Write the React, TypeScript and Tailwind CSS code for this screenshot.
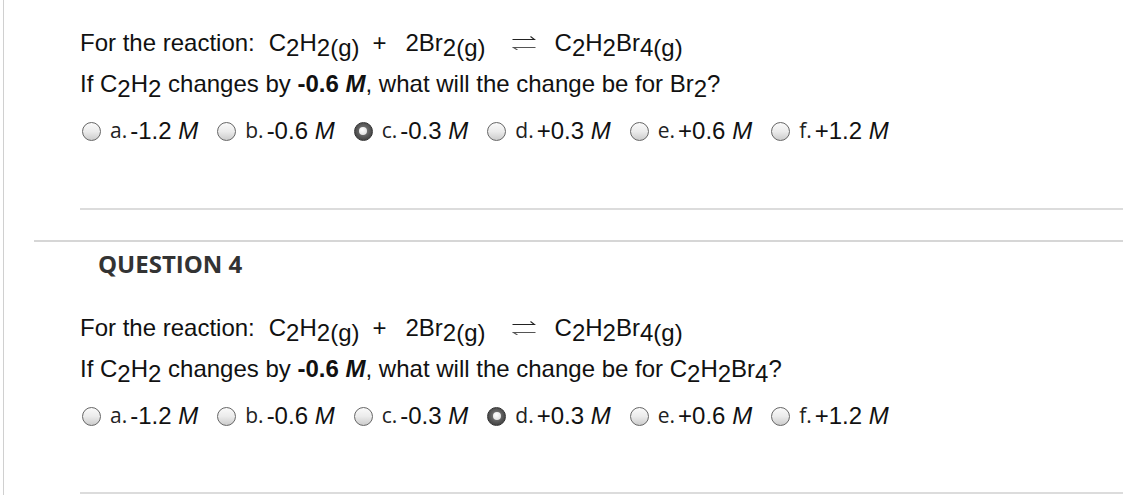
import React from "react";

const arial = { fontFamily: '"Liberation Sans", Arial, sans-serif' };
const open = { fontFamily: '"Open Sans", sans-serif' };

function Sub({ children }: { children: React.ReactNode }) {
  return <span className="relative top-[5px]">{children}</span>;
}

function Arrow() {
  return (
    <svg width="24" height="14" viewBox="0 0 24 14" className="ml-[26px] mr-[19px] relative top-[-1px]">
      <path d="M0.5 3.5 H22.5 L18.5 0.5" fill="none" stroke="#222" strokeWidth="1.1" />
      <path d="M23.5 11.5 H1.5 L5.5 14" fill="none" stroke="#555" strokeWidth="1.1" />
    </svg>
  );
}

function Radio({ checked }: { checked?: boolean }) {
  if (checked) {
    return (
      <span className="inline-flex w-[19px] h-[19px] rounded-full items-center justify-center bg-[radial-gradient(circle_at_50%_45%,#8a8a8a_0%,#555_55%,#2e2e2e_100%)] border border-[#333] shrink-0">
        <span className="w-[8px] h-[8px] rounded-full bg-[radial-gradient(circle_at_40%_35%,#fff_0%,#e4e4e4_70%,#bbb_100%)]" />
      </span>
    );
  }
  return (
    <span className="inline-block w-[19px] h-[19px] rounded-full border border-[#666] bg-[linear-gradient(180deg,#fafafa_0%,#ebebeb_50%,#cccccc_100%)] shrink-0" />
  );
}

function Option({ letter, value, checked }: { letter: string; value: string; checked?: boolean }) {
  return (
    <span className="inline-flex items-center mr-[19px]">
      <Radio checked={checked} />
      <span className="ml-[9px] text-[21px] text-[#222]" style={open}>
        {letter}.
      </span>
      <span className="ml-[3px] text-[24px] text-[#111]" style={arial}>
        {value} <i>M</i>
      </span>
    </span>
  );
}

function Reaction() {
  return (
    <div className="flex items-baseline text-[24px] leading-[41px] h-[41px] text-[#111]" style={arial}>
      <span>For the reaction:</span>
      <span className="ml-[14px]">
        C<Sub>2</Sub>H<Sub>2(g)</Sub>
      </span>
      <span className="ml-[13px]">+</span>
      <span className="ml-[19px]">
        2Br<Sub>2(g)</Sub>
      </span>
      <Arrow />
      <span>
        C<Sub>2</Sub>H<Sub>2</Sub>Br<Sub>4(g)</Sub>
      </span>
    </div>
  );
}

function Question({ target, selected }: { target: React.ReactNode; selected: number }) {
  const opts = [
    ["a", "-1.2"],
    ["b", "-0.6"],
    ["c", "-0.3"],
    ["d", "+0.3"],
    ["e", "+0.6"],
    ["f", "+1.2"],
  ];
  return (
    <div className="pl-[76px]">
      <Reaction />
      <div className="text-[24px] leading-[41px] h-[41px] text-[#111]" style={arial}>
        If C<Sub>2</Sub>H<Sub>2</Sub> changes by <b>-0.6 <i>M</i></b>, what will the change be for {target}?
      </div>
      <div className="flex items-center pl-[2px] mt-[8px] h-[38px]">
        {opts.map(([l, v], i) => (
          <Option key={l} letter={l} value={v} checked={i === selected} />
        ))}
      </div>
    </div>
  );
}

export default function App() {
  return (
    <div className="w-[1123px] h-[495px] bg-white overflow-hidden flex">
      <div className="ml-[3px] w-[1px] bg-[#d0d0d0] h-full" />
      <div className="flex-1 flex flex-col">
        <div className="h-[22px] shrink-0" />
        <Question
          target={
            <>
              Br<Sub>2</Sub>
            </>
          }
          selected={2}
        />
        <div className="h-[58px] shrink-0" />
        <div className="ml-[76px] h-[2px] bg-[#dcdcdc] shrink-0" />
        <div className="h-[30px] shrink-0" />
        <div className="ml-[30px] h-[2px] bg-[#d6d6d6] shrink-0" />
        <div
          className="pl-[94px] mt-[6px] text-[24px] leading-[32px] h-[32px] font-bold text-[#333] shrink-0"
          style={open}
        >
          QUESTION 4
        </div>
        <div className="h-[27px] shrink-0" />
        <Question
          target={
            <>
              C<Sub>2</Sub>H<Sub>2</Sub>Br<Sub>4</Sub>
            </>
          }
          selected={3}
        />
        <div className="flex-1" />
        <div className="ml-[76px] h-[2px] bg-[#dcdcdc] mb-[1px] shrink-0" />
      </div>
    </div>
  );
}
